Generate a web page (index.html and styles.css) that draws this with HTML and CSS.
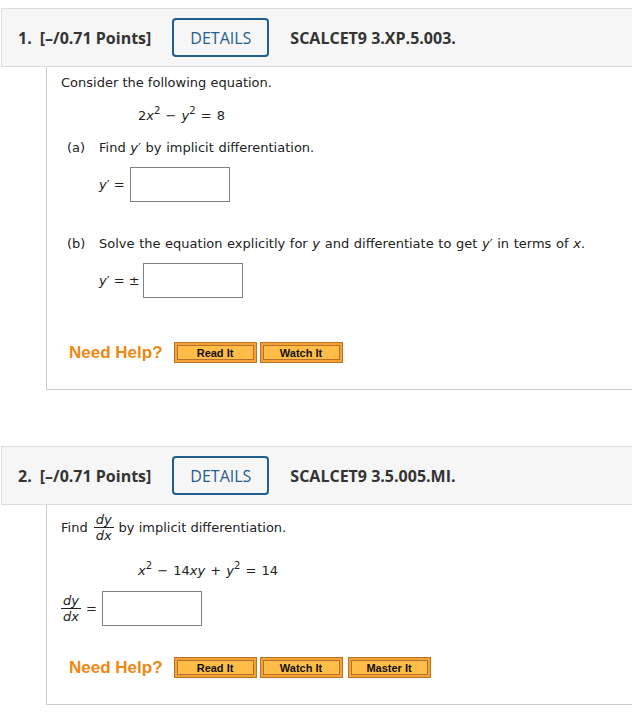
FILE: index.html
```html
<!DOCTYPE html>
<html>
<head>
<meta charset="utf-8">
<link rel="stylesheet" href="styles.css">
</head>
<body>
<div class="page">
  <section class="question">
    <div class="qhead">
      <span class="qnum">1.</span>
      <span class="points">[–/0.71 Points]</span>
      <span class="details">DETAILS</span>
      <span class="code">SCALCET9 3.XP.5.003.</span>
    </div>
    <div class="qbody q1">
      <p class="line">Consider the following equation.</p>
      <p class="line eq eq1">2<i>x</i><sup>2</sup> − <i>y</i><sup>2</sup> = 8</p>
      <p class="line part parta"><span class="plabel">(a)</span><span class="ptext">Find <i>y</i>′ by implicit differentiation.</span></p>
      <div class="ansrow ans-a"><span class="lhs"><i>y</i>′ =</span><span class="box"></span></div>
      <p class="line part partb"><span class="plabel">(b)</span><span class="ptext">Solve the equation explicitly for <i>y</i> and differentiate to get <i>y</i>′ in terms of <i>x</i>.</span></p>
      <div class="ansrow ans-b"><span class="lhs"><i>y</i>′ = ±</span><span class="box"></span></div>
      <div class="help help1">
        <span class="needhelp">Need Help?</span>
        <span class="btn"><span class="btn-in">Read It</span></span>
        <span class="btn"><span class="btn-in">Watch It</span></span>
      </div>
    </div>
  </section>

  <section class="question q2sec">
    <div class="qhead">
      <span class="qnum">2.</span>
      <span class="points">[–/0.71 Points]</span>
      <span class="details">DETAILS</span>
      <span class="code">SCALCET9 3.5.005.MI.</span>
    </div>
    <div class="qbody q2">
      <div class="findline"><span>Find</span><span class="frac"><span class="num"><i>dy</i></span><span class="den"><i>dx</i></span></span><span>by implicit differentiation.</span></div>
      <p class="line eq eq2"><i>x</i><sup>2</sup> − 14<i>xy</i> + <i>y</i><sup>2</sup> = 14</p>
      <div class="ansrow ans-c"><span class="frac frac-lhs"><span class="num"><i>dy</i></span><span class="den"><i>dx</i></span></span><span class="eqsign">=</span><span class="box"></span></div>
      <div class="help help2">
        <span class="needhelp">Need Help?</span>
        <span class="btn"><span class="btn-in">Read It</span></span>
        <span class="btn"><span class="btn-in">Watch It</span></span>
        <span class="btn btn-master"><span class="btn-in">Master It</span></span>
      </div>
    </div>
  </section>
</div>
</body>
</html>
```

FILE: styles.css
```css
html, body {
  margin: 0;
  padding: 0;
  background: #fff;
}
body {
  font-family: "DejaVu Sans", Verdana, sans-serif;
  font-size: 13px;
  color: #222;
  overflow: hidden;
}
.page {
  padding: 8px 0 0 1px;
  width: 700px;
}
.qhead {
  display: flex;
  align-items: center;
  height: 57px;
  background: #f6f6f6;
  border: 1px solid #dcdcdc;
  border-right: none;
  padding-left: 16px;
  font-family: "Open Sans", sans-serif;
  font-size: 16px;
  color: #333;
}
.qnum {
  font-weight: 700;
  margin-right: 8px;
}
.points {
  font-weight: 700;
}
.details {
  margin-left: 21px;
  box-sizing: border-box;
  width: 97px;
  height: 39px;
  border: 2px solid #1f5e8e;
  border-radius: 4px;
  display: flex;
  align-items: center;
  justify-content: center;
  color: #1f5e8e;
  font-weight: 400;
}
.code {
  margin-left: 21px;
  font-weight: 700;
}
.qbody {
  margin-left: 45px;
  border-left: 1px solid #cccccc;
  border-bottom: 1px solid #cccccc;
  padding: 7px 0 26px 14px;
}
.line {
  margin: 0;
  line-height: 18px;
  white-space: nowrap;
}
sup {
  font-size: 10px;
  line-height: 0;
  vertical-align: 6px;
}
.eq {
  padding-left: 77px;
  word-spacing: 1px;
}
.eq1 { margin-top: 15px; }
.part {
  padding-left: 6px;
  display: flex;
}
.plabel {
  width: 32px;
  flex: none;
}
.ptext {
  white-space: pre;
  word-spacing: 0.5px;
}
.parta { margin-top: 14px; }
.partb { margin-top: 33px; }
.ansrow {
  display: flex;
  align-items: center;
  padding-left: 38px;
  margin-top: 10px;
}
.lhs {
  margin-right: 5px;
  white-space: nowrap;
}
.ans-b .lhs {
  margin-right: 3px;
}
.box {
  display: block;
  box-sizing: border-box;
  width: 100px;
  height: 35px;
  border: 1px solid #808080;
  background: #fff;
}
.help {
  display: flex;
  align-items: center;
  padding-left: 8px;
}
.help1 { margin-top: 44px; }
.help2 { margin-top: 31px; }
.needhelp {
  font-family: "Liberation Sans", Arial, sans-serif;
  font-weight: bold;
  font-size: 17px;
  color: #f0870f;
  margin-right: 11px;
}
.btn {
  box-sizing: border-box;
  width: 83px;
  height: 21px;
  border: 1px solid #b97428;
  background: #f6a133;
  padding: 2px;
  margin-right: 3px;
  display: flex;
}
.btn-master {
  margin-left: 2px;
}
.btn-in {
  flex: 1;
  border: 1px solid #b37130;
  background: #ffbd47;
  display: flex;
  align-items: center;
  justify-content: center;
  font-family: "Liberation Sans", Arial, sans-serif;
  font-weight: bold;
  font-size: 11px;
  color: #111;
}
.q2sec {
  margin-top: 56px;
}
.q2 {
  padding-top: 7px;
}
.findline {
  display: flex;
  align-items: center;
}
.frac {
  display: inline-flex;
  flex-direction: column;
  align-items: center;
  margin: 0 5px 0 6px;
}
.frac .num {
  line-height: 15px;
  padding: 0 2px;
  border-bottom: 1px solid #222;
}
.frac .den {
  line-height: 15px;
}
.eq2 { margin-top: 19px; }
.ans-c {
  padding-left: 0;
  margin-top: 11px;
}
.frac-lhs {
  margin: 0;
}
.eqsign {
  margin: 0 5px 0 5px;
}
```
